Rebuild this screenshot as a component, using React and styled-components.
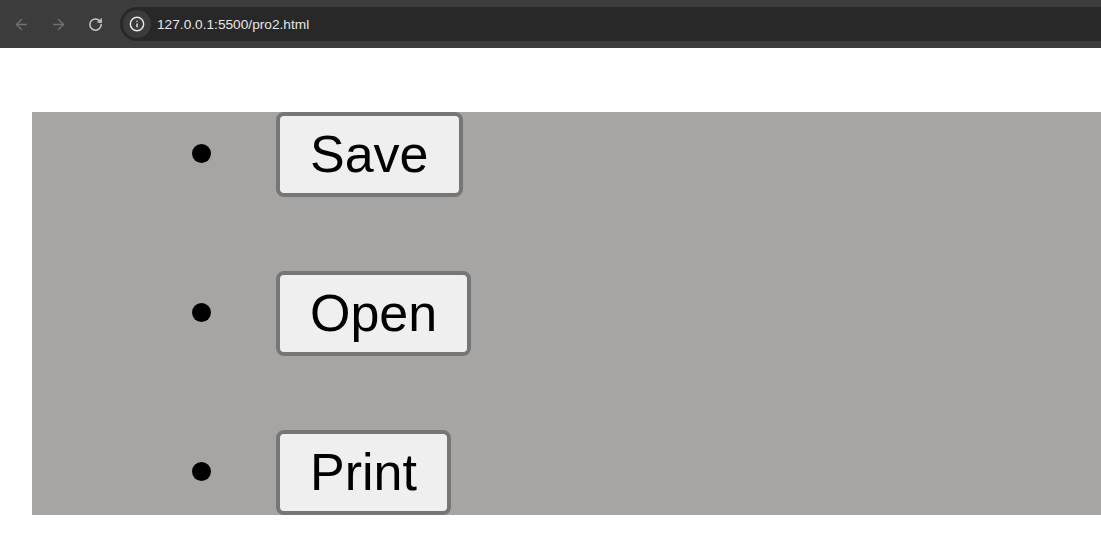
import styled, { createGlobalStyle } from "styled-components";
import { ArrowLeft, ArrowRight, RotateCw, Info } from "lucide-react";

const GlobalStyle = createGlobalStyle`
  body {
    margin: 0;
    background: #fff;
    font-family: "Liberation Sans", Arial, sans-serif;
  }
`;

// browser chrome on top of the shot
const Toolbar = styled.header`
  height: 48px;
  background: #3c3c3c;
  display: flex;
  align-items: center;
  padding-left: 3px;
  overflow: hidden;
`;

const NavButton = styled.span`
  width: 36px;
  height: 36px;
  margin-right: 1px;
  display: flex;
  align-items: center;
  justify-content: center;
  color: ${(p) => (p.$dim ? "#6f6f6f" : "#c8c8c8")};
`;

const Omnibox = styled.div`
  flex: 1;
  height: 34px;
  margin-left: 6px;
  margin-right: -40px;
  border-radius: 17px;
  background: #282828;
  display: flex;
  align-items: center;
  padding-left: 3px;
`;

const InfoBadge = styled.span`
  width: 28px;
  height: 28px;
  border-radius: 50%;
  background: #3b3b3b;
  color: #e6e6e6;
  display: flex;
  align-items: center;
  justify-content: center;
`;

const Url = styled.span`
  margin-left: 6px;
  font-size: 13.7px;
  color: #e6e6e6;
`;

const Main = styled.main`
  padding-top: 64px;
`;

const MenuList = styled.ul`
  margin: 0 0 0 32px;
  padding: 0 0 0 160px;
  list-style: none;
  background: #a6a5a3;
  display: flex;
  flex-direction: column;
  gap: 74px;
`;

const Item = styled.li`
  display: flex;
  align-items: center;
`;

const Dot = styled.span`
  width: 19px;
  height: 19px;
  border-radius: 50%;
  background: #000;
  margin-right: 65px;
  margin-bottom: 3px;
`;

const Button = styled.button`
  font-family: "Liberation Sans", Arial, sans-serif;
  font-size: 52px;
  line-height: normal;
  color: #000;
  background: #efefef;
  border: 4px solid #767676;
  border-radius: 8px;
  padding: 8px 30px 9px;
`;

const items = ["Save", "Open", "Print"];

export default function App() {
  return (
    <>
      <GlobalStyle />
      <Toolbar>
        <NavButton $dim>
          <ArrowLeft size={17} strokeWidth={2} />
        </NavButton>
        <NavButton $dim>
          <ArrowRight size={17} strokeWidth={2} />
        </NavButton>
        <NavButton>
          <RotateCw size={15} strokeWidth={2.4} />
        </NavButton>
        <Omnibox>
          <InfoBadge>
            <Info size={16} strokeWidth={2.2} />
          </InfoBadge>
          <Url>127.0.0.1:5500/pro2.html</Url>
        </Omnibox>
      </Toolbar>
      <Main>
        <MenuList>
          {items.map((label) => (
            <Item key={label}>
              <Dot />
              <Button>{label}</Button>
            </Item>
          ))}
        </MenuList>
      </Main>
    </>
  );
}
